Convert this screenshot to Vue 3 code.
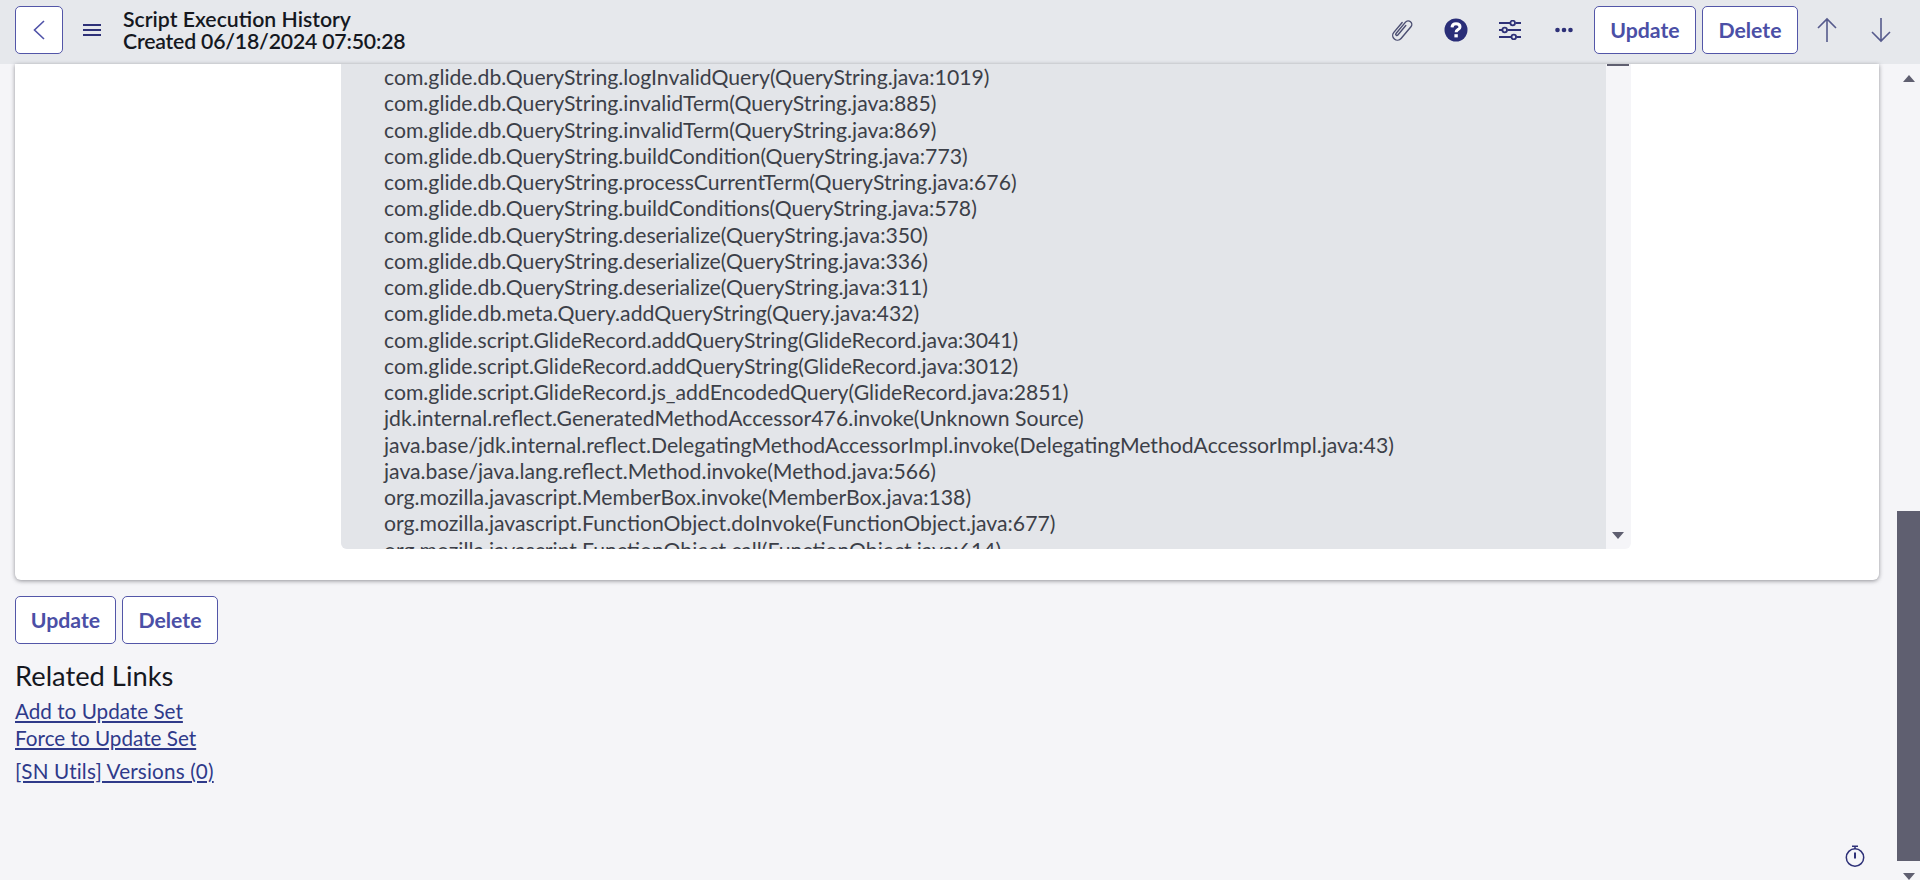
<script setup>
const lines = [
  'com.glide.db.QueryString.logInvalidQuery(QueryString.java:1019)',
  'com.glide.db.QueryString.invalidTerm(QueryString.java:885)',
  'com.glide.db.QueryString.invalidTerm(QueryString.java:869)',
  'com.glide.db.QueryString.buildCondition(QueryString.java:773)',
  'com.glide.db.QueryString.processCurrentTerm(QueryString.java:676)',
  'com.glide.db.QueryString.buildConditions(QueryString.java:578)',
  'com.glide.db.QueryString.deserialize(QueryString.java:350)',
  'com.glide.db.QueryString.deserialize(QueryString.java:336)',
  'com.glide.db.QueryString.deserialize(QueryString.java:311)',
  'com.glide.db.meta.Query.addQueryString(Query.java:432)',
  'com.glide.script.GlideRecord.addQueryString(GlideRecord.java:3041)',
  'com.glide.script.GlideRecord.addQueryString(GlideRecord.java:3012)',
  'com.glide.script.GlideRecord.js_addEncodedQuery(GlideRecord.java:2851)',
  'jdk.internal.reflect.GeneratedMethodAccessor476.invoke(Unknown Source)',
  'java.base/jdk.internal.reflect.DelegatingMethodAccessorImpl.invoke(DelegatingMethodAccessorImpl.java:43)',
  'java.base/java.lang.reflect.Method.invoke(Method.java:566)',
  'org.mozilla.javascript.MemberBox.invoke(MemberBox.java:138)',
  'org.mozilla.javascript.FunctionObject.doInvoke(FunctionObject.java:677)',
  'org.mozilla.javascript.FunctionObject.call(FunctionObject.java:614)'
]
</script>

<template>
  <div class="page">
    <header class="topbar">
      <button class="btn back" aria-label="Back">
        <svg width="20" height="24" viewBox="0 0 20 24" fill="none" stroke="#4f52a8" stroke-width="1.6"><path d="M15 3 5.500 12 15 21" /></svg>
      </button>
      <svg class="burger" width="18" height="14" viewBox="0 0 18 14" stroke="#2e3178" stroke-width="1.8"><path d="M0 2h18M0 7h18M0 12h18" /></svg>
      <div class="title">
        <div>Script Execution History</div>
        <div class="created">Created 06/18/2024 07:50:28</div>
      </div>
      <div class="actions">
        <span class="icon">
          <svg width="26" height="26" viewBox="2 2 22 22" fill="none" stroke="#4c4f72" stroke-width="1.200" stroke-linecap="round"><g transform="rotate(40 13 13)"><path d="M9 8v11a4 4 0 0 0 8 0V6a3 3 0 0 0-6 0v12.500a1 1 0 0 0 2 0V8" /></g></svg>
        </span>
        <span class="icon">
          <svg width="26" height="26" viewBox="0 0 26 26"><circle cx="13" cy="13" r="11.500" fill="#2a2e78" /><path d="M9 10.300c.2-2.300 1.800-3.500 4-3.500 2.300 0 4 1.200 4 3.100 0 2.700-3.900 2.700-3.900 5.300" fill="none" stroke="#fff" stroke-width="3" /><rect x="11.400" y="17.200" width="3.400" height="3.200" fill="#fff" /></svg>
        </span>
        <span class="icon">
          <svg width="22" height="20" viewBox="0 0 22 20" fill="none" stroke="#2e3178" stroke-width="1.800"><path d="M0 3h11M16.500 3H22M0 10h3M8.500 10H22M0 17h12M17.500 17H22" /><circle cx="13.700" cy="3" r="2.300" /><circle cx="5.700" cy="10" r="2.300" /><circle cx="14.800" cy="17" r="2.300" /></svg>
        </span>
        <span class="icon">
          <svg width="20" height="6" viewBox="0 0 20 6" fill="#2e3178"><circle cx="3.500" cy="3" r="2.300" /><circle cx="10" cy="3" r="2.300" /><circle cx="16.500" cy="3" r="2.300" /></svg>
        </span>
      </div>
      <button class="btn update-top">Update</button>
      <button class="btn delete-top">Delete</button>
      <span class="nav-arrow first">
        <svg width="22" height="26" viewBox="0 0 22 26" fill="none" stroke="#565a8c" stroke-width="1.6"><path d="M11 25V2M2 11l9-9 9 9" /></svg>
      </span>
      <span class="nav-arrow last">
        <svg width="22" height="26" viewBox="0 0 22 26" fill="none" stroke="#565a8c" stroke-width="1.6"><path d="M11 1v23M2 15l9 9 9-9" /></svg>
      </span>
    </header>

    <div class="scroll-area">
      <main class="content">
        <section class="card">
          <div class="stack-box">
            <div class="stack-text">
              <div v-for="line in lines" :key="line" class="stack-line">{{ line }}</div>
            </div>
            <div class="box-scrollbar">
              <span class="box-thumb"></span>
              <span class="tri-down dark"></span>
            </div>
          </div>
        </section>

        <div class="bottom-buttons">
          <button class="btn update-bottom">Update</button>
          <button class="btn delete-bottom">Delete</button>
        </div>

        <h2 class="related">Related Links</h2>
        <a class="rel-link" href="#">Add to Update Set</a>
        <a class="rel-link" href="#">Force to Update Set</a>
        <a class="rel-link utils" href="#">[SN Utils] Versions (0)</a>

        <svg class="timer" width="22" height="24" viewBox="0 0 22 24" fill="none" stroke="#2e3178" stroke-width="1.500"><circle cx="11" cy="13.500" r="8.700" /><path d="M8 2.200h6M11 2.500v2.500" /><path d="M11 8.500v6" stroke-width="2" /></svg>
      </main>

      <aside class="page-scrollbar">
        <span class="tri-up"></span>
        <div class="page-track"><div class="page-thumb"></div></div>
        <span class="tri-down"></span>
      </aside>
    </div>
  </div>
</template>

<style>
html, body { margin: 0; background: #f5f5f8; }
</style>

<style scoped>
.page {
  height: 880px;
  width: 1920px;
  overflow: hidden;
  display: flex;
  flex-direction: column;
  background: #f5f5f8;
  font-family: Lato, "Liberation Sans", sans-serif;
  font-size: 21.2px;
  color: #1a1d24;
}
.topbar {
  height: 64px;
  flex: none;
  display: flex;
  align-items: center;
  background: #e6e8ec;
  padding: 0 0 4px 15px;
  box-sizing: border-box;
}
.btn {
  height: 48px;
  box-sizing: border-box;
  border: 1.25px solid #5356a8;
  border-radius: 5px;
  background: #fff;
  color: #4b4fa6;
  font: 700 21.25px Lato, "Liberation Sans", sans-serif;
  padding: 0;
  display: flex;
  align-items: center;
  justify-content: center;
}
.back { width: 48px; }
.burger { margin-left: 20px; flex: none; }
.title {
  margin-left: 22px;
  font-weight: 600;
  font-size: 21.25px;
  line-height: 22px;
  color: #15181f;
}
.created { letter-spacing: -0.2px; }
.actions {
  margin-left: auto;
  display: flex;
  align-items: center;
}
.icon {
  width: 54px;
  display: flex;
  justify-content: center;
}
.update-top { width: 102px; margin-left: 3px; }
.delete-top { width: 96px; margin-left: 6px; }
.nav-arrow { display: flex; justify-content: center; margin-right: 12px; width: 42px; }
.nav-arrow.first { margin-left: 8px; }
.nav-arrow.last { margin-right: 18px; }
.scroll-area {
  flex: 1;
  display: flex;
  min-height: 0;
}
.content {
  flex: 1;
  padding: 0 18px 0 15px;
  min-width: 0;
  position: relative;
}
.card {
  height: 516px;
  background: #fff;
  border-radius: 0 0 6px 6px;
  box-shadow: 0 1px 4px rgba(60, 60, 70, 0.55);
  box-sizing: border-box;
  padding: 0 248px 31px 326px;
  display: flex;
}
.stack-box {
  flex: 1;
  display: flex;
  border-radius: 0 0 6px 6px;
  overflow: hidden;
  background: #f5f5f8;
}
.stack-text {
  flex: 1;
  background: #e3e5e9;
  padding-left: 43px;
  overflow: hidden;
  color: #3c3f48;
  line-height: 26.25px;
  white-space: nowrap;
}
.box-scrollbar {
  width: 25px;
  position: relative;
  flex: none;
}
.box-thumb {
  position: absolute;
  left: 1px;
  right: 2px;
  top: 0;
  height: 2px;
  background: #5f5f70;
}
.tri-down, .tri-up {
  display: block;
  width: 0;
  height: 0;
  border-left: 6px solid transparent;
  border-right: 6px solid transparent;
}
.tri-down { border-top: 7px solid #5f5f70; }
.tri-up { border-bottom: 7px solid #5f5f70; }
.tri-down.dark {
  position: absolute;
  bottom: 10px;
  left: 6px;
}
.bottom-buttons {
  margin-top: 16px;
  display: flex;
  gap: 6px;
}
.update-bottom { width: 101px; }
.delete-bottom { width: 96px; }
.related {
  margin: 16px 0 0;
  font-size: 27.3px;
  line-height: 32px;
  font-weight: 400;
  color: #15181f;
}
.rel-link {
  display: block;
  width: fit-content;
  color: #2f3a8a;
  font-size: 20.7px;
  line-height: 26.5px;
  text-decoration: underline;
}
.rel-link:first-of-type { margin-top: 6px; }
.rel-link.utils { margin-top: 7px; letter-spacing: 0.15px; }
.timer {
  position: absolute;
  left: 1844px;
  top: 780px;
}
.page-scrollbar {
  width: 23px;
  flex: none;
  display: flex;
  flex-direction: column;
  align-items: center;
  padding-top: 11px;
  box-sizing: border-box;
  height: 816px;
}
.page-track {
  flex: 1;
  width: 100%;
  padding-top: 429px;
  box-sizing: border-box;
}
.page-thumb {
  height: 350px;
  background: #5f5f70;
}
</style>
